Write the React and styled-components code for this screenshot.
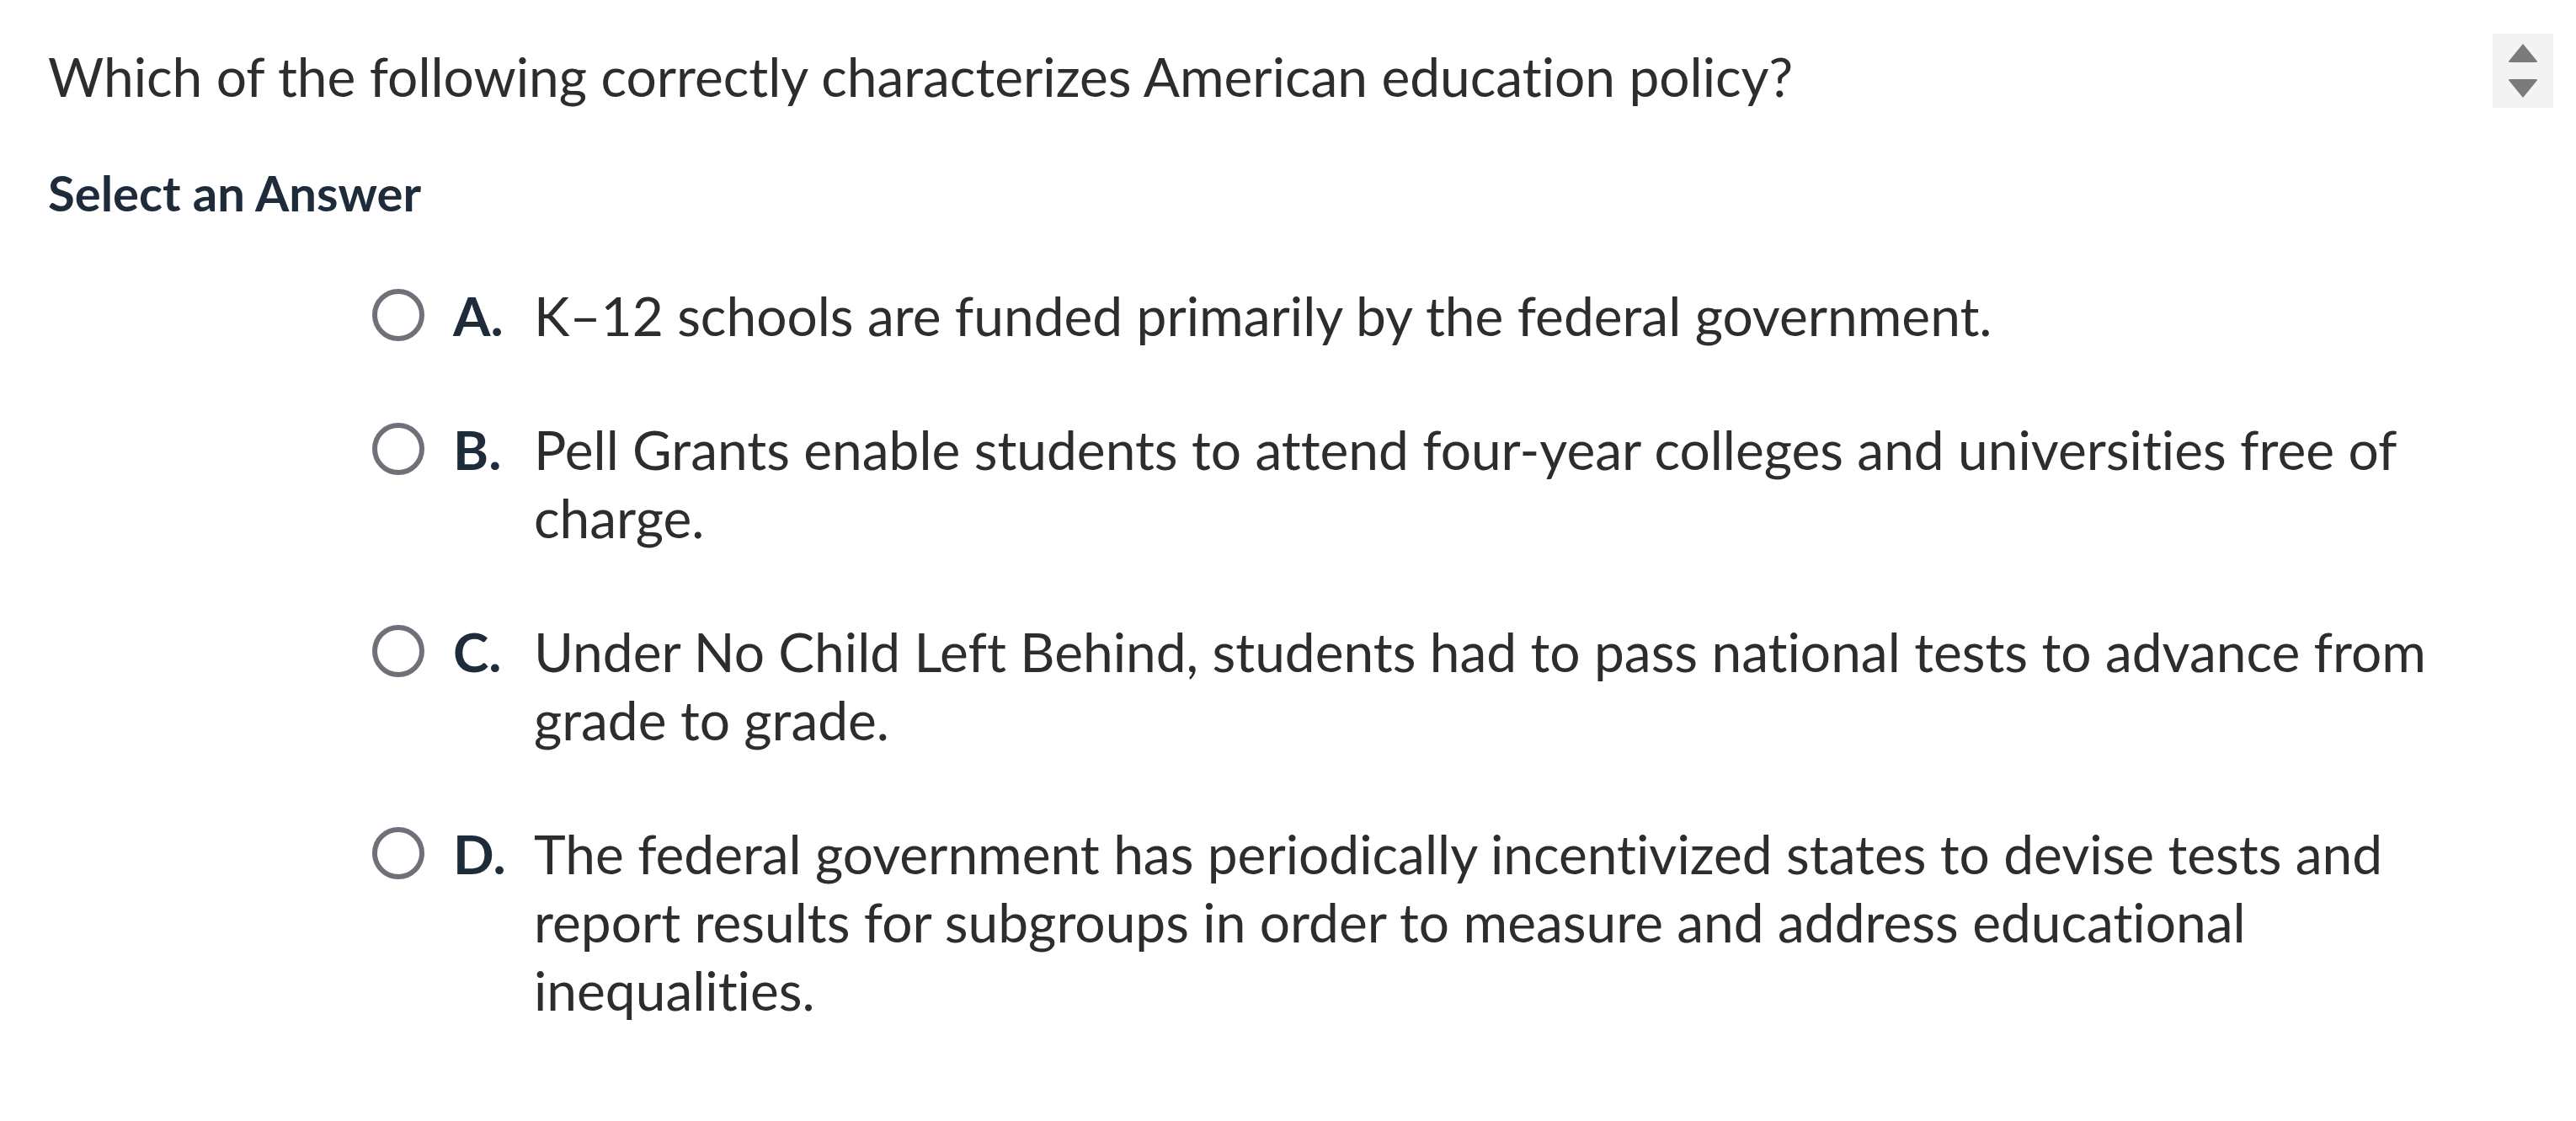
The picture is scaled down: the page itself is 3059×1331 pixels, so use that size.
import React from 'react';
import styled, { createGlobalStyle } from 'styled-components';

const GlobalStyle = createGlobalStyle`
  body {
    margin: 0;
    background: #fff;
    font-family: Lato, "Liberation Sans", sans-serif;
    font-variant-ligatures: none;
  }
`;

const Page = styled.div`
  padding: 40px 27px 60px 57px;
`;

const Header = styled.div`
  display: flex;
  justify-content: space-between;
  align-items: flex-start;
`;

const Question = styled.p`
  margin: 10px 0 0;
  font-size: 64px;
  line-height: 82px;
  color: #2d2d2d;
`;

const Spinner = styled.div`
  width: 72px;
  height: 88px;
  background: #f3f3f3;
  display: flex;
  flex-direction: column;
  align-items: center;
  justify-content: center;
  gap: 20px;
`;

const Arrow = styled.span`
  width: 0;
  height: 0;
  border-left: 18px solid transparent;
  border-right: 18px solid transparent;
  border-bottom: ${(p) => (p.down ? 'none' : '22px solid #7b7b7b')};
  border-top: ${(p) => (p.down ? '22px solid #7b7b7b' : 'none')};
  border-radius: 3px;
`;

const Legend = styled.h2`
  margin: 63px 0 0;
  font-size: 58px;
  line-height: 68px;
  font-weight: 700;
  color: #1e2b3a;
`;

const Options = styled.ul`
  list-style: none;
  margin: 71px 0 0;
  padding: 0 0 0 385px;
  display: flex;
  flex-direction: column;
  gap: 78px;
`;

const Option = styled.li`
  display: grid;
  grid-template-columns: 62px 130px 2316px;
  align-items: start;
  font-size: 64px;
  line-height: 81px;
  color: #2d2d2d;
  cursor: pointer;
`;

const Radio = styled.span`
  box-sizing: border-box;
  width: 62px;
  height: 62px;
  margin-top: 9px;
  border: 6px solid #6e7178;
  border-radius: 50%;
  background: #fff;
`;

const Letter = styled.span`
  padding-left: 34px;
  font-weight: 700;
  color: #1e2b3a;
`;

const Text = styled.span``;

const answers = [
  { key: 'A', text: 'K\u201312 schools are funded primarily by the federal government.' },
  { key: 'B', text: 'Pell Grants enable students to attend four-year colleges and universities free of charge.' },
  { key: 'C', text: 'Under No Child Left Behind, students had to pass national tests to advance from grade to grade.' },
  {
    key: 'D',
    text: 'The federal government has periodically incentivized states to devise tests and report results for subgroups in order to measure and address educational inequalities.',
  },
];

export default function App() {
  return (
    <Page>
      <GlobalStyle />
      <Header>
        <Question>Which of the following correctly characterizes American education policy?</Question>
        <Spinner>
          <Arrow />
          <Arrow down />
        </Spinner>
      </Header>
      <Legend>Select an Answer</Legend>
      <Options>
        {answers.map((a) => (
          <Option key={a.key}>
            <Radio />
            <Letter>{a.key}.</Letter>
            <Text>{a.text}</Text>
          </Option>
        ))}
      </Options>
    </Page>
  );
}
